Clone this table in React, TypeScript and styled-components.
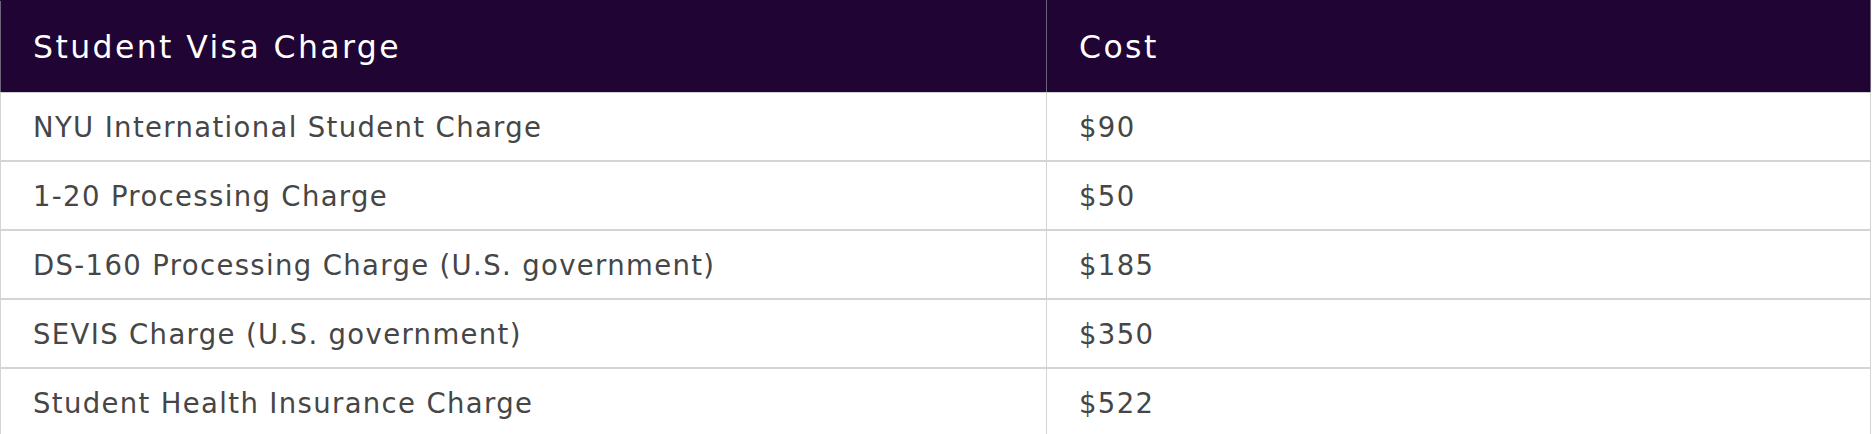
import React from 'react';
import styled, { createGlobalStyle } from 'styled-components';

const GlobalStyle = createGlobalStyle`
  html, body {
    margin: 0;
    padding: 0;
    background: #ffffff;
  }
`;

const StyledTable = styled.table`
  width: 1871px;
  border-collapse: collapse;
  table-layout: fixed;
  font-family: 'DejaVu Sans', 'Noto Sans', sans-serif;
  border: 1px solid #d4d4d4;
`;

const StyledHeadCell = styled.th<{ $width?: string }>`
  width: ${(p) => p.$width || 'auto'};
  height: 91px;
  padding: 0 32px;
  background: #1f0434;
  color: #ffffff;
  font-size: 31.5px;
  font-weight: 400;
  letter-spacing: 2.4px;
  text-align: left;
  border: 1px solid #6e6478;
  border-top-color: #1f0434;
  border-bottom: 1px solid #cfcfcf;
`;

const StyledCell = styled.td`
  height: 67px;
  padding: 0 32px;
  color: #464646;
  font-size: 27.5px;
  letter-spacing: 1.35px;
  border: 1px solid #d4d4d4;
  border-bottom-width: 2px;
`;

const charges = [
  { id: 1, title: 'NYU International Student Charge', cost: '$90' },
  { id: 2, title: '1-20 Processing Charge', cost: '$50' },
  { id: 3, title: 'DS-160 Processing Charge (U.S. government)', cost: '$185' },
  { id: 4, title: 'SEVIS Charge (U.S. government)', cost: '$350' },
  { id: 5, title: 'Student Health Insurance Charge', cost: '$522' },
];

const App = () => {
  return (
    <>
      <GlobalStyle />
      <StyledTable>
        <thead>
          <tr>
            <StyledHeadCell $width="981px">Student Visa Charge</StyledHeadCell>
            <StyledHeadCell>Cost</StyledHeadCell>
          </tr>
        </thead>
        <tbody>
          {charges.map((item) => (
            <tr key={item.id}>
              <StyledCell>{item.title}</StyledCell>
              <StyledCell>{item.cost}</StyledCell>
            </tr>
          ))}
        </tbody>
      </StyledTable>
    </>
  );
};

export default App;
